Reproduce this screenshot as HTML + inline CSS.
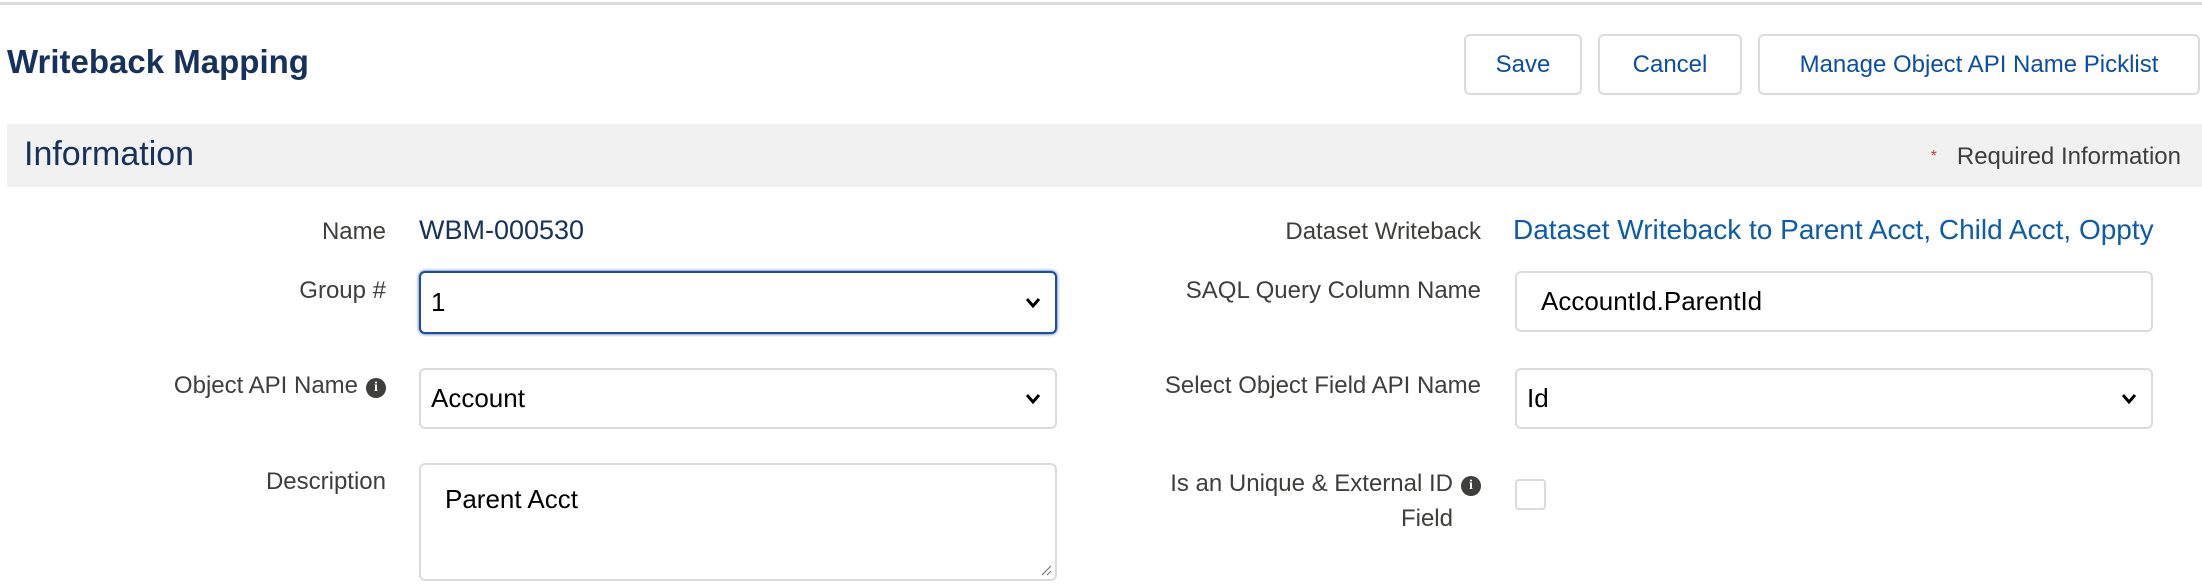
<!DOCTYPE html>
<html><head><meta charset="utf-8"><style>
*{box-sizing:border-box;margin:0;padding:0}
body{width:2202px;height:588px;background:#fff;font-family:"Liberation Sans",sans-serif;position:relative;overflow:hidden}
.a{position:absolute}
.topline{left:0;top:2px;width:2202px;height:3px;background:#dddbda}
.title{left:7px;top:43px;font-size:33px;font-weight:bold;color:#16325c}
.btn{top:34px;height:61px;border:2px solid #dddbda;border-radius:6px;background:#fff;color:#0b4ea2;font-size:24px;display:flex;align-items:center;justify-content:center}
.bar{left:7px;top:124px;width:2195px;height:63px;background:#f1f1f1}
.info{left:24px;top:135px;font-size:34px;color:#16325c}
.req{right:21px;top:143px;font-size:24px;color:#3e3e3c}
.req span{color:#c23934;font-size:16px;margin-right:20px;vertical-align:3px}
.lbl{font-size:24px;color:#3e3e3c;text-align:right}
.fld{border:2px solid #dddbda;border-radius:6px;background:#fff;font-size:26px;color:#000;display:flex;align-items:center;padding-left:10px}
.chev{position:absolute;right:14px;top:50%;margin-top:-6px}
.i{display:inline-block;width:20px;height:20px;border-radius:50%;background:#3e3e3c;color:#fff;font-size:14px;font-weight:bold;text-align:center;line-height:20px;font-family:"Liberation Serif",serif;margin-left:8px;vertical-align:2px}
</style></head><body>
<div class="a topline"></div>
<div class="a title">Writeback Mapping</div>
<div class="a btn" style="left:1464px;width:118px">Save</div>
<div class="a btn" style="left:1598px;width:144px">Cancel</div>
<div class="a btn" style="left:1758px;width:442px">Manage Object API Name Picklist</div>
<div class="a bar"></div>
<div class="a info">Information</div>
<div class="a req"><span>*</span>Required Information</div>

<div class="a lbl" style="right:1816px;top:218px">Name</div>
<div class="a" style="left:419px;top:215px;font-size:27px;color:#16325c">WBM-000530</div>
<div class="a lbl" style="right:1816px;top:277px">Group #</div>
<div class="a fld" style="left:419px;top:271px;width:638px;height:63px;border:2px solid #1b4f9c;box-shadow:0 0 3px #1b4f9c">1<svg class="chev" width="16" height="12" viewBox="0 0 16 12"><path d="M2 2l6 7 6-7" fill="none" stroke="#000" stroke-width="3"/></svg></div>
<div class="a lbl" style="right:1816px;top:372px">Object API Name<span class="i">i</span></div>
<div class="a fld" style="left:419px;top:368px;width:638px;height:61px">Account<svg class="chev" width="16" height="12" viewBox="0 0 16 12"><path d="M2 2l6 7 6-7" fill="none" stroke="#000" stroke-width="3"/></svg></div>
<div class="a lbl" style="right:1816px;top:468px">Description</div>
<div class="a fld" style="left:419px;top:463px;width:638px;height:118px;align-items:flex-start;padding:19px 0 0 24px">Parent Acct<svg style="position:absolute;right:3px;bottom:3px" width="12" height="12"><path d="M2 11L11 2M7 11L11 7" stroke="#777" stroke-width="1.2"/></svg></div>

<div class="a lbl" style="right:721px;top:218px">Dataset Writeback</div>
<div class="a" style="left:1513px;top:214px;font-size:28px;color:#0b5cab">Dataset Writeback to Parent Acct, Child Acct, Oppty</div>
<div class="a lbl" style="right:721px;top:277px">SAQL Query Column Name</div>
<div class="a fld" style="left:1515px;top:271px;width:638px;height:61px;padding-left:24px">AccountId.ParentId</div>
<div class="a lbl" style="right:721px;top:372px">Select Object Field API Name</div>
<div class="a fld" style="left:1515px;top:368px;width:638px;height:61px">Id<svg class="chev" width="16" height="12" viewBox="0 0 16 12"><path d="M2 2l6 7 6-7" fill="none" stroke="#000" stroke-width="3"/></svg></div>
<div class="a lbl" style="right:721px;top:466px;line-height:35px">Is an Unique &amp; External ID<span class="i">i</span><br><span style="margin-right:28px">Field</span></div>
<div class="a" style="left:1515px;top:479px;width:31px;height:31px;border:2px solid #dddbda;border-radius:4px"></div>
</body></html>
